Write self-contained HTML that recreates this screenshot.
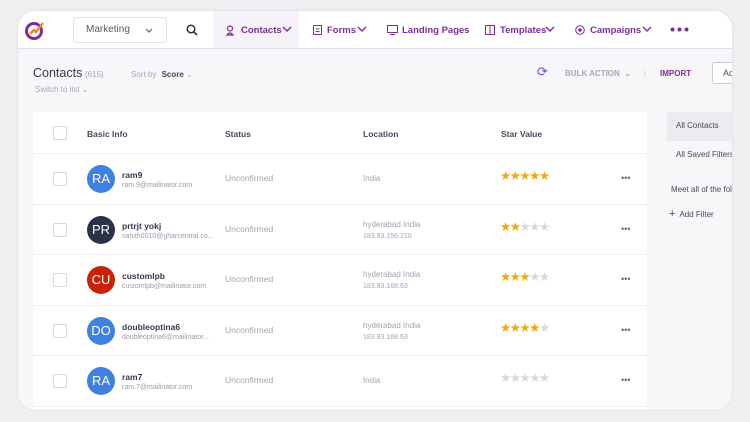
<!DOCTYPE html><html><head><style>
*{box-sizing:border-box;margin:0;padding:0}
html,body{width:750px;height:422px;overflow:hidden}
body{background:#efeef0;font-family:"Liberation Sans",sans-serif;position:relative}
.card{position:absolute;left:17px;top:10px;width:716px;height:401px;background:#f7f6f9;border-radius:18px;overflow:hidden;border:1px solid #e4e2e6}
.nav{position:absolute;left:0;top:0;width:716px;height:38px;background:#fff;border-bottom:1px solid #eadcf0}
.a{position:absolute;font-size:9.5px;color:#7a2f98;font-weight:bold;top:14px;white-space:nowrap}
.ch{position:absolute;top:15px}
.t{position:absolute;white-space:nowrap}
.panel{position:absolute;left:15px;top:101px;width:614px;height:299px;background:#fff}
.row{position:absolute;left:0;width:614px;height:50px;border-top:1px solid #f0eef2}
.cb{position:absolute;left:20px;width:14px;height:14px;border:1px solid #d8d8dc;border-radius:2px;background:#fff}
.av{position:absolute;left:54px;width:28px;height:28px;border-radius:50%;color:#fff;font-size:13px;text-align:center;line-height:28px}
.nm{position:absolute;left:89px;font-size:8.5px;color:#333a4d;font-weight:bold}
.em{position:absolute;left:89px;font-size:7px;color:#9a9ca8}
.st{position:absolute;left:192px;font-size:8.5px;color:#a2a4b2}
.lc{position:absolute;left:330px;font-size:8px;color:#a2a4b2;line-height:11px}
.stars{position:absolute;left:467px;font-size:12.5px;letter-spacing:-1.5px;color:#d8d8d8}
.stars b{color:#f2a90c;font-weight:normal}
.dots{position:absolute;left:588px;font-size:9px;color:#666;letter-spacing:0px}
</style></head><body>
<div class="card">
<div class="nav">
 <svg style="position:absolute;left:6px;top:8px" width="22" height="22" viewBox="0 0 22 22"><circle cx="10" cy="12" r="7.5" fill="none" stroke="#7a2f98" stroke-width="3"/><path d="M6 15 L10 11 L12 13 L19 4" stroke="#f08a24" stroke-width="2.5" fill="none"/></svg>
 <div style="position:absolute;left:55px;top:6px;width:94px;height:26px;border:1px solid #e2e2e6;border-radius:4px"></div>
 <div class="t" style="left:68px;top:13px;font-size:10px;color:#555a66">Marketing</div>
 <svg class="ch" style="left:127px;top:17px" width="8" height="5"><path d="M1 1 L4 4 L7 1" stroke="#666" fill="none" stroke-width="1.2"/></svg>
 <svg style="position:absolute;left:168px;top:13px" width="12" height="12"><circle cx="5" cy="5" r="3.8" fill="none" stroke="#333" stroke-width="1.5"/><path d="M8 8 L11 11" stroke="#333" stroke-width="1.6"/></svg>
 <div style="position:absolute;left:195px;top:0;width:86px;height:37px;background:#f6f3f8"></div>
 <svg style="position:absolute;left:208px;top:14px" width="8" height="11"><circle cx="4" cy="3.5" r="2.5" fill="none" stroke="#7a2f98" stroke-width="1.2"/><path d="M1 10 Q4 6 7 10 Z" fill="none" stroke="#7a2f98" stroke-width="1.2"/></svg>
 <div class="a" style="left:223px">Contacts</div>
 <svg class="ch" style="left:264px" width="10" height="6"><path d="M1 1 L5 5 L9 1" stroke="#7a2f98" fill="none" stroke-width="1.4"/></svg>
 <svg style="position:absolute;left:295px;top:14px" width="9" height="10"><rect x="0.5" y="0.5" width="8" height="9" fill="none" stroke="#7a2f98"/><path d="M2.5 4H6.5M2.5 6.5H6.5" stroke="#7a2f98"/></svg>
 <div class="a" style="left:309px">Forms</div>
 <svg class="ch" style="left:339px" width="10" height="6"><path d="M1 1 L5 5 L9 1" stroke="#7a2f98" fill="none" stroke-width="1.4"/></svg>
 <svg style="position:absolute;left:369px;top:14px" width="11" height="10"><rect x="0.5" y="0.5" width="10" height="7" fill="none" stroke="#7a2f98"/><path d="M3 9.5H8" stroke="#7a2f98"/></svg>
 <div class="a" style="left:384px">Landing Pages</div>
 <svg style="position:absolute;left:467px;top:14px" width="10" height="10"><rect x="0.5" y="0.5" width="9" height="9" fill="none" stroke="#7a2f98"/><path d="M5 0.5V9.5" stroke="#7a2f98"/></svg>
 <div class="a" style="left:482px">Templates</div>
 <svg class="ch" style="left:527px" width="10" height="6"><path d="M1 1 L5 5 L9 1" stroke="#7a2f98" fill="none" stroke-width="1.4"/></svg>
 <svg style="position:absolute;left:557px;top:14px" width="10" height="10"><circle cx="5" cy="5" r="4.3" fill="none" stroke="#7a2f98"/><circle cx="5" cy="5" r="1.8" fill="#7a2f98"/></svg>
 <div class="a" style="left:572px">Campaigns</div>
 <svg class="ch" style="left:624px" width="10" height="6"><path d="M1 1 L5 5 L9 1" stroke="#7a2f98" fill="none" stroke-width="1.4"/></svg>
 <svg style="position:absolute;left:652px;top:16px" width="20" height="5"><circle cx="2.5" cy="2.5" r="2" fill="#7a2f98"/><circle cx="9.5" cy="2.5" r="2" fill="#7a2f98"/><circle cx="16.5" cy="2.5" r="2" fill="#7a2f98"/></svg>
</div>
<div class="t" style="left:15px;top:55px;font-size:12.5px;color:#333a4d">Contacts</div>
<div class="t" style="left:67px;top:59px;font-size:8px;color:#a8a8b4">(615)</div>
<div class="t" style="left:113px;top:59px;font-size:8px;color:#a8a8b4">Sort by <b style="color:#444a5c;margin-left:3px">Score</b> ⌄</div>
<div class="t" style="left:17px;top:74px;font-size:8px;color:#a8a8b4">Switch to list ⌄</div>
<div class="t" style="left:519px;top:53px;font-size:13px;color:#6a4ce0">⟳</div>
<div class="t" style="left:547px;top:58px;font-size:8px;color:#a8a8b4;font-weight:bold">BULK ACTION &nbsp;⌄</div>
<div class="t" style="left:626px;top:58px;font-size:8px;color:#ccc">|</div>
<div class="t" style="left:642px;top:58px;font-size:8px;color:#7a2f98;font-weight:bold">IMPORT</div>
<div style="position:absolute;left:694px;top:51px;width:40px;height:22px;border:1px solid #ccc;border-radius:3px;background:#fff"></div>
<div class="t" style="left:705px;top:57px;font-size:9px;color:#555">Act</div>
<div class="panel">
 <div class="cb" style="top:14px"></div>
 <div class="t" style="left:54px;top:17px;font-size:8.5px;color:#444a5c;font-weight:bold">Basic Info</div>
 <div class="t" style="left:192px;top:17px;font-size:8.5px;color:#444a5c;font-weight:bold">Status</div>
 <div class="t" style="left:330px;top:17px;font-size:8.5px;color:#444a5c;font-weight:bold">Location</div>
 <div class="t" style="left:468px;top:17px;font-size:8.5px;color:#444a5c;font-weight:bold">Star Value</div>
 <div class="row" style="top:41px"><div class="cb" style="top:18px"></div><div class="av" style="top:11px;background:#3f80e0">RA</div><div class="nm" style="top:16px">ram9</div><div class="em" style="top:28px">ram.9@mailinator.com</div><div class="st" style="top:19px">Unconfirmed</div><div class="lc" style="top:19px">India</div><div class="stars" style="top:14px"><b>★★★★★</b></div><div class="dots" style="top:19px">•••</div></div>
 <div class="row" style="top:92px"><div class="cb" style="top:18px"></div><div class="av" style="top:11px;background:#2a3148">PR</div><div class="nm" style="top:16px">prtrjt yokj</div><div class="em" style="top:28px">sahith0010@gharcentral.co...</div><div class="st" style="top:19px">Unconfirmed</div><div class="lc" style="top:14px">hyderabad India<br><span style="font-size:7px">183.83.156.210</span></div><div class="stars" style="top:14px"><b>★★</b>★★★</div><div class="dots" style="top:19px">•••</div></div>
 <div class="row" style="top:142px"><div class="cb" style="top:18px"></div><div class="av" style="top:11px;background:#c8230a">CU</div><div class="nm" style="top:16px">customlpb</div><div class="em" style="top:28px">customlpb@mailinator.com</div><div class="st" style="top:19px">Unconfirmed</div><div class="lc" style="top:14px">hyderabad India<br><span style="font-size:7px">183.83.168.63</span></div><div class="stars" style="top:14px"><b>★★★</b>★★</div><div class="dots" style="top:19px">•••</div></div>
 <div class="row" style="top:193px"><div class="cb" style="top:18px"></div><div class="av" style="top:11px;background:#3f80e0">DO</div><div class="nm" style="top:16px">doubleoptina6</div><div class="em" style="top:28px">doubleoptina6@mailinator...</div><div class="st" style="top:19px">Unconfirmed</div><div class="lc" style="top:14px">hyderabad India<br><span style="font-size:7px">183.83.168.63</span></div><div class="stars" style="top:14px"><b>★★★★</b>★</div><div class="dots" style="top:19px">•••</div></div>
 <div class="row" style="top:243px"><div class="cb" style="top:18px"></div><div class="av" style="top:11px;background:#3f80e0">RA</div><div class="nm" style="top:16px">ram7</div><div class="em" style="top:28px">ram.7@mailinator.com</div><div class="st" style="top:19px">Unconfirmed</div><div class="lc" style="top:19px">India</div><div class="stars" style="top:14px">★★★★★</div><div class="dots" style="top:19px">•••</div></div>
 <div class="row" style="top:294px;height:5px"></div>
</div>
<div style="position:absolute;left:649px;top:101px;width:70px;height:29px;background:#ececf0"></div>
<div class="t" style="left:658px;top:110px;font-size:8px;color:#444a5c">All Contacts</div>
<div class="t" style="left:658px;top:139px;font-size:8px;color:#444a5c">All Saved Filters</div>
<div class="t" style="left:653px;top:174px;font-size:8px;color:#444a5c">Meet all of the fol</div>
<div class="t" style="left:651px;top:197px;font-size:8px;color:#444a5c"><span style="font-size:11px">+</span>&nbsp; Add Filter</div>
</div>
</body></html>
